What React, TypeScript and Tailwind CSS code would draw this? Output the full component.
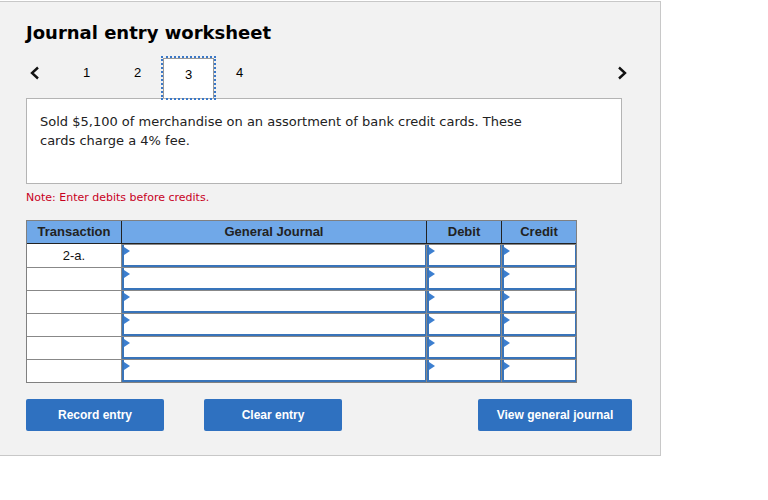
const rows = ["2-a.", "", "", "", "", ""];

const Chevron = ({ dir }: { dir: "left" | "right" }) => (
  <svg width="12" height="14" viewBox="0 0 12 14" className="block">
    <polyline
      points={dir === "left" ? "9,1.5 3,7 9,12.5" : "3,1.5 9,7 3,12.5"}
      fill="none"
      stroke="#111"
      strokeWidth="2.4"
    />
  </svg>
);

const InputCell = ({ last }: { last?: boolean }) => (
  <div className={`h-[23px] border-t border-[#888] ${last ? "" : "border-r"} bg-white`}>
    <div className="relative h-full border-l-2 border-r border-b-2 border-[#3874ba]">
      {/* little marker */}
      <span className="absolute left-0 top-[2px] h-0 w-0 border-y-[4px] border-l-[6px] border-y-transparent border-l-[#3c7fd0]" />
    </div>
  </div>
);

const App = () => {
  return (
    <div className="h-[500px] w-full bg-white">
      <div className="mt-px h-[455px] w-[661px] border-y border-r border-[#c8c8c8] bg-[#f2f2f2] pl-[26px] font-['DejaVu_Sans',Verdana,sans-serif]">
        <h1 className="pt-[20px] text-[18px] font-bold leading-[22px] text-black">
          Journal entry worksheet
        </h1>

        {/* Tabs */}
        <div className="relative z-10 -mb-[2px] mt-[14px] flex h-[42px] w-[596px] items-start font-['Liberation_Sans',Arial,sans-serif] text-[13px] text-black">
          <div className="flex h-[30px] w-[35px] items-center pl-[3px]">
            <Chevron dir="left" />
          </div>
          {["1", "2", "3", "4"].map((n) =>
            n === "3" ? (
              <div
                key={n}
                className="flex h-[40px] w-[51px] justify-center border-x border-t border-[#9a9a9a] bg-white pt-[6px] outline-2 outline-offset-0 outline-dotted outline-[#3a78c8]"
              >
                {n}
              </div>
            ) : (
              <div key={n} className="flex h-[30px] w-[51px] items-center justify-center">
                {n}
              </div>
            )
          )}
          <div className="ml-auto flex h-[30px] items-center">
            <span className="mr-[-6px]">
              <Chevron dir="right" />
            </span>
          </div>
        </div>

        {/* Question */}
        <div className="h-[86px] w-[596px] border border-[#b4b4b4] bg-white pl-[13px] pt-[13px] text-[13px] leading-[19px] text-[#222]">
          <p>
            Sold $5,100 of merchandise on an assortment of bank credit cards. These
            <br />
            cards charge a 4% fee.
          </p>
        </div>

        <p className="mt-[7px] text-[11px] leading-[14px] text-[#c8001e]">
          Note: Enter debits before credits.
        </p>

        {/* Journal table */}
        <div className="mt-[15px] w-[551px] border border-[#808080] font-['Liberation_Sans',Arial,sans-serif] text-[13px]">
          <div className="grid grid-cols-[95px_305px_75px_74px] bg-[#70a8e8] font-bold text-[#222]">
            <div className="flex h-[22px] items-center justify-center border-r border-[#222]">Transaction</div>
            <div className="flex h-[22px] items-center justify-center border-r border-[#222]">General Journal</div>
            <div className="flex h-[22px] items-center justify-center border-r border-[#222]">Debit</div>
            <div className="flex h-[22px] items-center justify-center">Credit</div>
          </div>
          <div className="border-t border-[#222]" />
          {rows.map((t, i) => (
            <div key={i} className="grid grid-cols-[95px_305px_75px_74px]">
              <div
                className={`flex h-[23px] items-center justify-center border-r border-[#888] bg-white text-[#111] ${
                  i === 0 ? "" : "border-t"
                }`}
              >
                {t}
              </div>
              <InputCell />
              <InputCell />
              <InputCell last />
            </div>
          ))}
        </div>

        {/* Actions */}
        <div className="mt-[16px] flex w-[606px] font-['Liberation_Sans',Arial,sans-serif] text-[12px] font-bold text-white">
          <button className="h-[32px] w-[138px] rounded-[2px] bg-[#2f71c0]">Record entry</button>
          <button className="ml-[40px] h-[32px] w-[138px] rounded-[2px] bg-[#2f71c0]">Clear entry</button>
          <button className="ml-auto h-[32px] w-[154px] rounded-[2px] bg-[#2f71c0]">View general journal</button>
        </div>
      </div>
    </div>
  );
};

export default App;
